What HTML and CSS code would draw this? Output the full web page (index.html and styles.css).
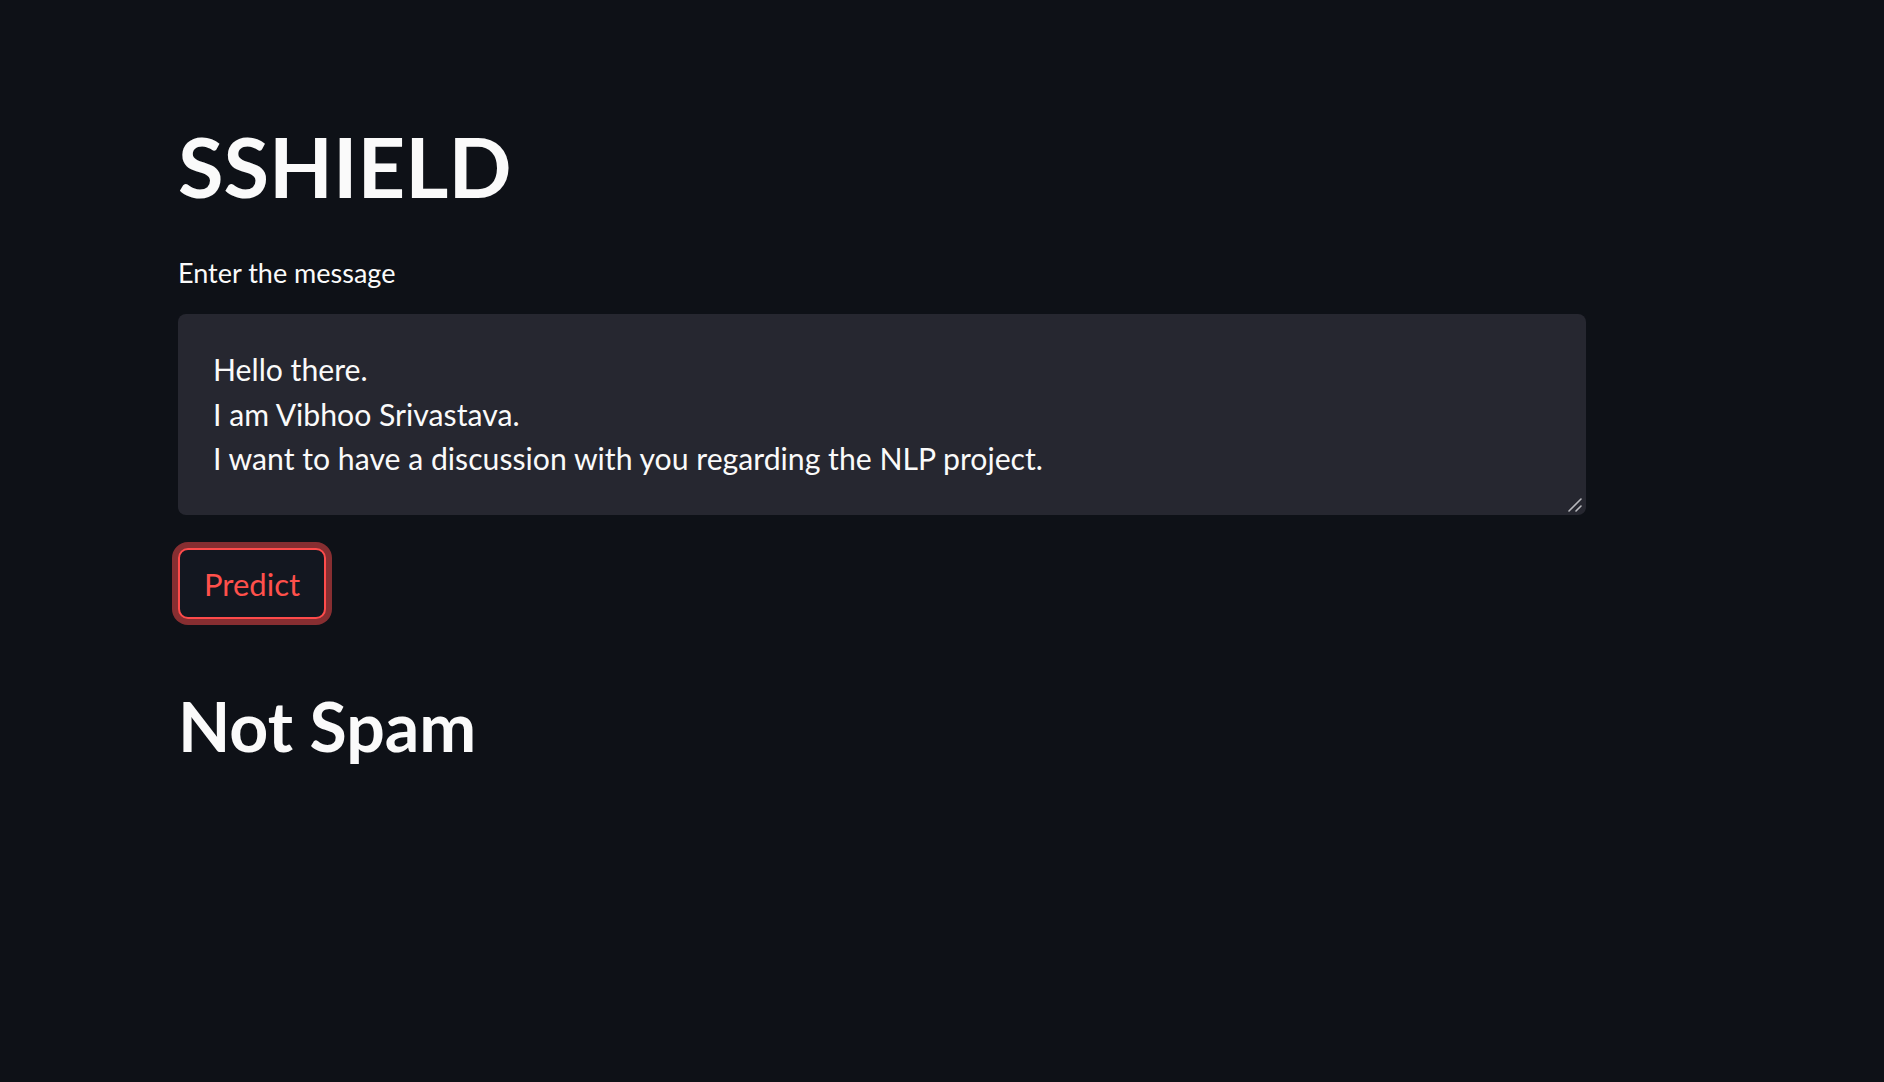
FILE: index.html
```html
<!DOCTYPE html>
<html lang="en">
<head>
<meta charset="utf-8">
<title>SSHIELD</title>
<link rel="stylesheet" href="styles.css">
</head>
<body>
<main class="app">
  <h1 class="title">SSHIELD</h1>
  <label class="field-label" for="msg">Enter the message</label>
  <div class="message-wrap">
    <textarea id="msg" class="message" spellcheck="false">Hello there.
I am Vibhoo Srivastava.
I want to have a discussion with you regarding the NLP project.</textarea>
    <svg class="grip" width="16" height="16" viewBox="0 0 16 16" aria-hidden="true">
      <line x1="2" y1="14" x2="14" y2="2" stroke="#b8b8bd" stroke-width="1.6" stroke-linecap="round"/>
      <line x1="9" y1="14" x2="14" y2="9" stroke="#b8b8bd" stroke-width="1.6" stroke-linecap="round"/>
    </svg>
  </div>
  <div class="actions">
    <button class="predict" type="button">Predict</button>
  </div>
  <h2 class="result">Not Spam</h2>
</main>
</body>
</html>
```

FILE: styles.css
```css
html, body {
  margin: 0;
  padding: 0;
  background: #0e1117;
  color: #fafafa;
  font-family: "Lato", "Source Sans Pro", sans-serif;
}

.app {
  display: flex;
  flex-direction: column;
  align-items: flex-start;
  width: 1408px;
  padding: 116px 0 0 178px;
}

.title {
  margin: 0;
  font-size: 83px;
  line-height: 100px;
  font-weight: 700;
  color: #fafafa;
}

.field-label {
  margin-top: 39px;
  font-size: 27px;
  line-height: 36px;
  color: #fafafa;
}

.message-wrap {
  position: relative;
  margin-top: 23px;
  width: 1408px;
  height: 201px;
}

.message {
  display: block;
  box-sizing: border-box;
  width: 100%;
  height: 100%;
  padding: 33px 35px;
  border: none;
  border-radius: 8px;
  background: #262730;
  color: #fafafa;
  font-family: "Lato", "Source Sans Pro", sans-serif;
  font-size: 30.2px;
  line-height: 44.5px;
  resize: none;
  outline: none;
}

.grip {
  position: absolute;
  right: 3px;
  bottom: 2px;
}

.actions {
  margin-top: 33px;
  display: flex;
}

.predict {
  box-sizing: border-box;
  height: 71px;
  padding: 0 24px;
  border: 2px solid rgb(255, 75, 75);
  border-radius: 10px;
  background: rgb(19, 23, 32);
  color: rgb(255, 80, 75);
  font-family: "Lato", "Source Sans Pro", sans-serif;
  font-size: 31px;
  line-height: 34px;
  box-shadow: 0 0 0 6px rgba(255, 75, 75, 0.5);
  cursor: pointer;
}

.result {
  margin: 65px 0 0;
  font-size: 68px;
  line-height: 84px;
  font-weight: 700;
  color: #fafafa;
}
```
